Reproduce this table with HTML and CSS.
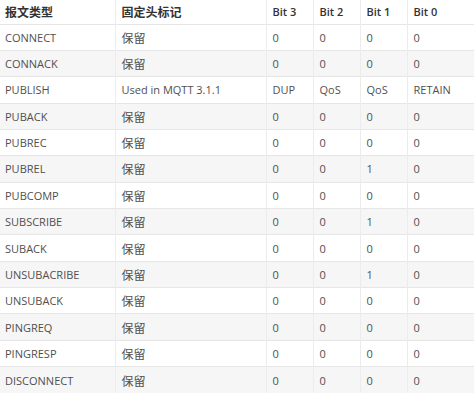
FILE: index.html
```html
<!DOCTYPE html>
<html lang="zh-CN">
<head>
<meta charset="utf-8">
<title>MQTT 固定头标记</title>
<link rel="stylesheet" href="styles.css">
</head>
<body>
<table class="flags">
  <colgroup>
    <col class="c-type">
    <col class="c-flag">
    <col class="c-bit">
    <col class="c-bit">
    <col class="c-bit">
    <col class="c-last">
  </colgroup>
  <thead>
    <tr><th class="cjk">报文类型</th><th class="cjk">固定头标记</th><th>Bit 3</th><th>Bit 2</th><th>Bit 1</th><th>Bit 0</th></tr>
  </thead>
  <tbody>
    <tr><td>CONNECT</td><td class="cjk">保留</td><td>0</td><td>0</td><td>0</td><td>0</td></tr>
    <tr><td>CONNACK</td><td class="cjk">保留</td><td>0</td><td>0</td><td>0</td><td>0</td></tr>
    <tr><td>PUBLISH</td><td>Used in MQTT 3.1.1</td><td>DUP</td><td>QoS</td><td>QoS</td><td>RETAIN</td></tr>
    <tr><td>PUBACK</td><td class="cjk">保留</td><td>0</td><td>0</td><td>0</td><td>0</td></tr>
    <tr><td>PUBREC</td><td class="cjk">保留</td><td>0</td><td>0</td><td>0</td><td>0</td></tr>
    <tr><td>PUBREL</td><td class="cjk">保留</td><td>0</td><td>0</td><td>1</td><td>0</td></tr>
    <tr><td>PUBCOMP</td><td class="cjk">保留</td><td>0</td><td>0</td><td>0</td><td>0</td></tr>
    <tr><td>SUBSCRIBE</td><td class="cjk">保留</td><td>0</td><td>0</td><td>1</td><td>0</td></tr>
    <tr><td>SUBACK</td><td class="cjk">保留</td><td>0</td><td>0</td><td>0</td><td>0</td></tr>
    <tr><td>UNSUBACRIBE</td><td class="cjk">保留</td><td>0</td><td>0</td><td>1</td><td>0</td></tr>
    <tr><td>UNSUBACK</td><td class="cjk">保留</td><td>0</td><td>0</td><td>0</td><td>0</td></tr>
    <tr><td>PINGREQ</td><td class="cjk">保留</td><td>0</td><td>0</td><td>0</td><td>0</td></tr>
    <tr><td>PINGRESP</td><td class="cjk">保留</td><td>0</td><td>0</td><td>0</td><td>0</td></tr>
    <tr><td>DISCONNECT</td><td class="cjk">保留</td><td>0</td><td>0</td><td>0</td><td>0</td></tr>
  </tbody>
</table>
</body>
</html>
```
FILE: styles.css
```css
html, body {
  margin: 0;
  padding: 0;
  background: #ffffff;
  overflow: hidden;
}

.flags {
  width: 474px;
  table-layout: fixed;
  border-collapse: collapse;
  font-family: "Open Sans", "Noto Sans CJK SC", sans-serif;
  font-size: 11px;
  color: #505050;
}

.c-type { width: 115px; }
.c-flag { width: 151px; }
.c-bit { width: 47px; }
.c-last { width: 67px; }

.flags th,
.flags td {
  text-align: left;
  padding: 0 6px;
  border-left: 1px solid #ececec;
  border-top: 1px solid #e6e6e6;
  white-space: nowrap;
  overflow: hidden;
}

.flags th:first-child,
.flags td:first-child {
  border-left: none;
  padding-left: 5px;
}

.flags .cjk {
  font-family: "Noto Sans CJK SC", sans-serif;
  font-size: 12px;
}

.flags thead tr {
  height: 24px;
}

.flags th {
  border-top: none;
  font-weight: bold;
  color: #333333;
}

.flags th:not(.cjk) {
  font-weight: 600;
}

.flags tbody tr {
  height: 26.36px;
}

.flags tbody tr:nth-child(even) {
  background: #f6f6f6;
}
```
